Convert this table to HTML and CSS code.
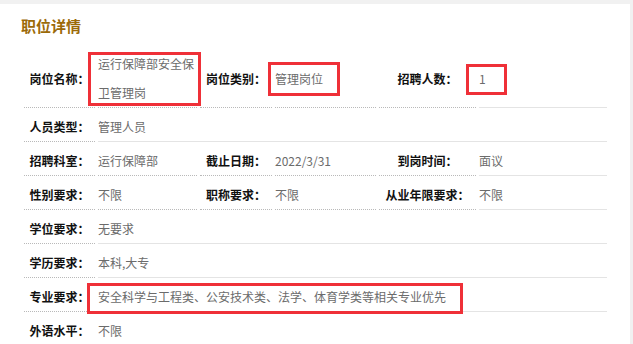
FILE: index.html
```html
<!DOCTYPE html>
<html lang="zh-CN">
<head>
<meta charset="utf-8">
<title>职位详情</title>
<link rel="stylesheet" href="styles.css">
</head>
<body>
<div class="panel">
  <h2 class="title">职位详情</h2>
  <table class="detail">
    <colgroup>
      <col class="c-l1"><col class="c-v1"><col class="c-l2"><col class="c-v2"><col class="c-l3"><col class="c-v3">
    </colgroup>
    <tbody>
      <tr>
        <th>岗位名称：</th><td>运行保障部安全保卫管理岗</td>
        <th>岗位类别：</th><td>管理岗位</td>
        <th>招聘人数：</th><td class="last">1</td>
      </tr>
      <tr>
        <th>人员类型：</th><td class="last" colspan="5">管理人员</td>
      </tr>
      <tr>
        <th>招聘科室：</th><td>运行保障部</td>
        <th>截止日期：</th><td>2022/3/31</td>
        <th>到岗时间：</th><td class="last">面议</td>
      </tr>
      <tr>
        <th>性别要求：</th><td>不限</td>
        <th>职称要求：</th><td>不限</td>
        <th>从业年限要求：</th><td class="last">不限</td>
      </tr>
      <tr>
        <th>学位要求：</th><td class="last" colspan="5">无要求</td>
      </tr>
      <tr>
        <th>学历要求：</th><td class="last" colspan="5">本科,大专</td>
      </tr>
      <tr>
        <th>专业要求：</th><td class="last" colspan="5">安全科学与工程类、公安技术类、法学、体育学类等相关专业优先</td>
      </tr>
      <tr>
        <th>外语水平：</th><td class="last" colspan="5">不限</td>
      </tr>
    </tbody>
  </table>
  <div class="mark mark-name"></div>
  <div class="mark mark-type"></div>
  <div class="mark mark-count"></div>
  <div class="mark mark-major"></div>
</div>
</body>
</html>
```
FILE: styles.css
```css
html, body {
  margin: 0;
  padding: 0;
}
body {
  background: #f1f1f1;
  font-family: "Noto Sans CJK SC", "Microsoft YaHei", sans-serif;
  height: 344px;
  overflow: hidden;
}
.panel {
  position: relative;
  margin-top: 4px;
  width: 630px;
  height: 340px;
  background: #ffffff;
  overflow: hidden;
}
.title {
  margin: 0;
  padding: 12px 0 0 21px;
  font-size: 15px;
  line-height: 20px;
  font-weight: bold;
  color: #9b6a08;
}
.detail {
  margin: 9px 0 0 21px;
  border-collapse: separate;
  border-spacing: 3px 0;
  table-layout: fixed;
  width: 589px;
  font-size: 12px;
  line-height: 29px;
}
.c-l1 { width: 71px; }
.c-v1 { width: 99px; }
.c-l2 { width: 72px; }
.c-v2 { width: 101px; }
.c-l3 { width: 97px; }
.c-v3 { width: 128px; }
.detail th,
.detail td {
  padding: 4px 0 0 0;
  border-bottom: 1px dotted #b9b9b9;
  vertical-align: middle;
}
.detail th {
  font-weight: bold;
  color: #111111;
  text-align: center;
  white-space: nowrap;
}
.detail td {
  color: #6b6b6b;
  text-align: left;
}
.detail td.last {
  border-bottom: 1px solid #e4e4e4;
}
.mark {
  position: absolute;
  border: 3px solid #ef3038;
  box-sizing: border-box;
}
.mark-name { left: 88px; top: 48px; width: 113px; height: 54px; }
.mark-type { left: 268px; top: 58px; width: 72px; height: 34px; }
.mark-count { left: 466px; top: 60px; width: 41px; height: 31px; }
.mark-major { left: 87px; top: 279px; width: 376px; height: 31px; }
```
